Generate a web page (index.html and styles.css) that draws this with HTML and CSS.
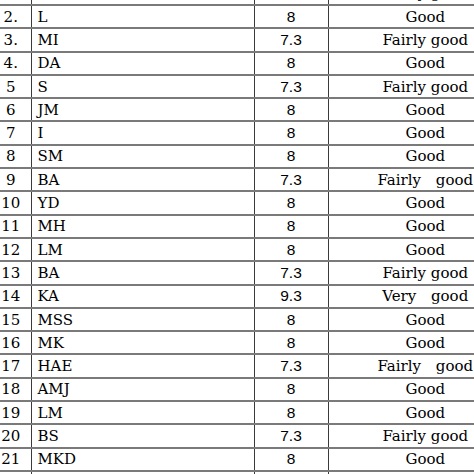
FILE: index.html
```html
<!DOCTYPE html>
<html>
<head>
<meta charset="utf-8">
<link rel="stylesheet" href="styles.css">
</head>
<body>
<div class="page">
<table class="grades">
<colgroup><col class="c1"><col class="c2"><col class="c3"><col class="c4"></colgroup>
<tbody>
<tr><td></td><td></td><td class="num"></td><td class="q">Fairly good</td></tr>
<tr><td>2.</td><td>L</td><td class="num">8</td><td class="q">Good</td></tr>
<tr><td>3.</td><td>MI</td><td class="num">7.3</td><td class="q">Fairly good</td></tr>
<tr><td>4.</td><td>DA</td><td class="num">8</td><td class="q">Good</td></tr>
<tr><td>5</td><td>S</td><td class="num">7.3</td><td class="q">Fairly good</td></tr>
<tr><td>6</td><td>JM</td><td class="num">8</td><td class="q">Good</td></tr>
<tr><td>7</td><td>I</td><td class="num">8</td><td class="q">Good</td></tr>
<tr><td>8</td><td>SM</td><td class="num">8</td><td class="q">Good</td></tr>
<tr><td>9</td><td>BA</td><td class="num">7.3</td><td class="q wide">Fairly good</td></tr>
<tr><td>10</td><td>YD</td><td class="num">8</td><td class="q">Good</td></tr>
<tr><td>11</td><td>MH</td><td class="num">8</td><td class="q">Good</td></tr>
<tr><td>12</td><td>LM</td><td class="num">8</td><td class="q">Good</td></tr>
<tr><td>13</td><td>BA</td><td class="num">7.3</td><td class="q">Fairly good</td></tr>
<tr><td>14</td><td>KA</td><td class="num">9.3</td><td class="q wide">Very good</td></tr>
<tr><td>15</td><td>MSS</td><td class="num">8</td><td class="q">Good</td></tr>
<tr><td>16</td><td>MK</td><td class="num">8</td><td class="q">Good</td></tr>
<tr><td>17</td><td>HAE</td><td class="num">7.3</td><td class="q wide">Fairly good</td></tr>
<tr><td>18</td><td>AMJ</td><td class="num">8</td><td class="q">Good</td></tr>
<tr><td>19</td><td>LM</td><td class="num">8</td><td class="q">Good</td></tr>
<tr><td>20</td><td>BS</td><td class="num">7.3</td><td class="q">Fairly good</td></tr>
<tr><td>21</td><td>MKD</td><td class="num">8</td><td class="q">Good</td></tr>
<tr><td></td><td></td><td class="num"></td><td class="q"></td></tr>
</tbody>
</table>
</div>
</body>
</html>
```
FILE: styles.css
```css
html, body {
  margin: 0;
  padding: 0;
  background: #ffffff;
}
body {
  width: 474px;
  height: 474px;
  overflow: hidden;
}
.page {
  margin-top: -19.3px;
  margin-left: -9px;
}
.grades {
  border-collapse: collapse;
  table-layout: fixed;
  width: 531px;
  font-family: "DejaVu Serif", "Liberation Serif", serif;
  font-size: 15px;
  color: #000;
}
.c1 { width: 40px; }
.c2 { width: 223px; }
.c3 { width: 74px; }
.c4 { width: 194px; }
.grades td {
  height: 21.3px;
  padding: 0 0 0 6px;
  border-top: 2px solid #7a7a7a;
  border-left: 1.5px solid #3a3a3a;
  white-space: nowrap;
  vertical-align: middle;
  line-height: 20px;
}
.grades td:first-child {
  border-left: none;
  text-align: center;
  padding: 0;
}
.grades td.num {
  font-family: "Liberation Sans", Arial, sans-serif;
  font-size: 15.5px;
  text-align: center;
  padding: 0;
}
.grades td.q {
  text-align: center;
  padding: 0;
}
.grades td.wide {
  word-spacing: 10px;
}
```
